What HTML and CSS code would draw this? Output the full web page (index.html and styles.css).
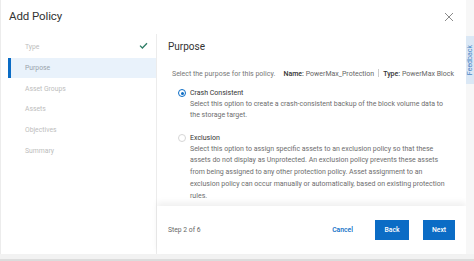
FILE: index.html
```html
<!DOCTYPE html>
<html>
<head>
<meta charset="utf-8">
<link rel="stylesheet" href="styles.css">
</head>
<body>
<div class="page">
  <div class="dialog">
    <div class="header">
      <div class="title">Add Policy</div>
      <svg class="close" width="10" height="10" viewBox="0 0 10 10"><path d="M1 1L9 9M9 1L1 9" stroke="#8a8a8a" stroke-width="1" fill="none"/></svg>
    </div>
    <div class="body">
      <div class="sidebar">
        <div class="step done"><span>Type</span><svg class="check" width="9" height="7" viewBox="0 0 9 7"><path d="M1 3.6L3.4 6L8 1.2" stroke="#2f7d66" stroke-width="1.3" fill="none"/></svg></div>
        <div class="step active"><span>Purpose</span></div>
        <div class="step"><span>Asset Groups</span></div>
        <div class="step"><span>Assets</span></div>
        <div class="step"><span>Objectives</span></div>
        <div class="step"><span>Summary</span></div>
      </div>
      <div class="main">
        <div class="scroll">
          <h2 class="heading">Purpose</h2>
          <div class="info-row">
            <span class="prompt">Select the purpose for this policy.</span>
            <span class="meta"><b>Name:</b> PowerMax_Protection<i class="sep"></i><b>Type:</b> PowerMax Block</span>
          </div>
          <div class="option">
            <span class="radio checked"></span>
            <div class="opt-text">
              <div class="opt-title">Crash Consistent</div>
              <div class="opt-desc">Select this option to create a crash-consistent backup of the block volume data to<br>the storage target.</div>
            </div>
          </div>
          <div class="option second">
            <span class="radio"></span>
            <div class="opt-text">
              <div class="opt-title">Exclusion</div>
              <div class="opt-desc">Select this option to assign specific assets to an exclusion policy so that these<br>assets do not display as Unprotected. An exclusion policy prevents these assets<br>from being assigned to any other protection policy. Asset assignment to an<br>exclusion policy can occur manually or automatically, based on existing protection<br>rules.</div>
            </div>
          </div>
        </div>
        <div class="footer">
          <span class="stepcount">Step 2 of 6</span>
          <span class="cancel">Cancel</span>
          <span class="btn back">Back</span>
          <span class="btn next">Next</span>
        </div>
      </div>
    </div>
  </div>
  <div class="strip">
    <div class="feedback"><span>Feedback</span></div>
  </div>
</div>
<div class="bottom"></div>
</body>
</html>
```
FILE: styles.css
```css
* { box-sizing: border-box; margin: 0; padding: 0; }
html, body { width: 474px; height: 261px; overflow: hidden; }
body {
  background: #ffffff;
  font-family: Roboto, "Liberation Sans", sans-serif;
  color: #444;
}
.page { display: flex; height: 254px; }
.dialog {
  width: 466px;
  display: flex;
  flex-direction: column;
  border-left: 1px solid #ececec;
  background: #fff;
}
.header {
  height: 34px;
  display: flex;
  align-items: center;
  justify-content: space-between;
  padding: 0 12px 2px 8px;
}
.title { font-size: 11.5px; color: #333; letter-spacing: -0.1px; }
.close { margin-top: 1px; }
.body { flex: 1; display: flex; }
.sidebar {
  width: 156px;
  padding: 3px 0 0 7px;
  border-right: 1px solid #ececec;
}
.step {
  height: 20.7px;
  display: flex;
  align-items: center;
  justify-content: space-between;
  padding: 0 8px 0 17px;
  font-size: 6.8px;
  color: #bdbdbd;
}
.step.done .check { margin-top: -4px; }
.step.active {
  background: #e9f2fb;
  border-left: 3px solid #0b6cc5;
  padding-left: 14px;
  color: #9aa3ab;
}
.main { flex: 1; display: flex; flex-direction: column; }
.scroll { flex: 1; padding: 6px 12px 0 11px; }
.heading { font-size: 10px; font-weight: 400; color: #333; line-height: 14px; }
.info-row {
  display: flex;
  justify-content: space-between;
  margin-top: 15px;
  padding-left: 4px;
  font-size: 7px;
  line-height: 10px;
  color: #777;
}
.meta { color: #666; }
.meta b { font-weight: 500; color: #333; }
.sep { display: inline-block; width: 1px; height: 8px; background: #ccc; margin: 0 4px -1px 4px; }
.option { display: flex; margin-top: 9px; padding-left: 10px; }
.option.second { margin-top: 11px; }
.radio {
  width: 8px; height: 8px;
  border-radius: 50%;
  border: 1px solid #d6d6d6;
  margin-top: 1px;
  flex: none;
  position: relative;
}
.radio.checked { border-color: #0b6cc5; }
.radio.checked::after {
  content: "";
  position: absolute;
  left: 1.5px; top: 1.5px;
  width: 3px; height: 3px;
  border-radius: 50%;
  background: #0b6cc5;
}
.opt-text { margin-left: 4px; }
.opt-title { font-size: 7px; line-height: 10px; color: #333; }
.opt-desc { font-size: 7px; line-height: 11.8px; color: #6e6e6e; margin-top: 0.5px; white-space: nowrap; }
.footer {
  height: 48px;
  display: flex;
  align-items: center;
  padding: 0 11px 0 11px;
  box-shadow: 0 -4px 6px rgba(0,0,0,0.06);
  font-size: 6.8px;
}
.stepcount { color: #666; flex: 1; }
.cancel { color: #0b6cc5; font-weight: 500; margin-right: 22px; }
.btn {
  height: 20px;
  display: flex;
  align-items: center;
  justify-content: center;
  background: #0b6cc5;
  color: #fff;
  font-weight: 500;
}
.back { width: 34px; margin-right: 14px; }
.next { width: 32px; }
.strip { width: 8px; background: #f7f7f7; padding-top: 36px; }
.feedback {
  width: 8px; height: 48px;
  background: #dbe8f5;
  display: flex;
  align-items: center;
  justify-content: center;
}
.feedback span {
  writing-mode: vertical-rl;
  transform: rotate(180deg);
  font-size: 7px;
  color: #4a86c5;
}
.bottom { height: 7px; background: #f2f2f2; border-bottom: 2px solid #dcdcdc; margin-top: 0; }
```
